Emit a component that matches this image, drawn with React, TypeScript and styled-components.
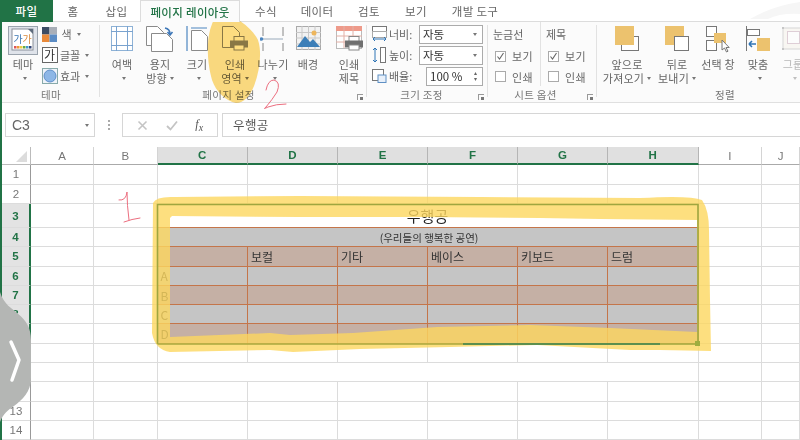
import React from "react";
import styled, { createGlobalStyle, css } from "styled-components";

const Global = createGlobalStyle`
  html, body { margin: 0; padding: 0; background: #fff; }
  * { box-sizing: border-box; }
`;

const FONT = `"Noto Sans CJK KR", "Noto Sans", "Liberation Sans", sans-serif`;
const GREEN = "#217346";
const ORANGE = "#c4754a";

const Page = styled.div`
  position: relative; width: 800px; height: 440px; overflow: hidden; background: #fff;
  font-family: ${FONT}; color: #555; filter: blur(0.45px);
  display: flex; flex-direction: column;
`;
const TabBar = styled.div`display: flex; height: 21px; background: #fff; flex: none;`;
const Tab = styled.div<{ $w: number; $kind?: "file" | "active" }>`
  width: ${p => p.$w}px; display: flex; align-items: center; justify-content: center;
  font-size: 11.5px; color: #666; letter-spacing: .3px; margin-bottom: -1px; position: relative; z-index: 1;
  ${p => p.$kind === "file" && css`background: ${GREEN}; color: #fff; font-weight: 500;`}
  ${p => p.$kind === "active" && css`background: #fbfbfb; color: ${GREEN}; border: 1px solid #dcdcdc; border-bottom: 0; font-weight: 500;`}
`;
const Body = styled.div`flex: 1; min-height: 0; border-left: 2px solid ${GREEN}; display: flex; flex-direction: column; background: #fff;`;
const Ribbon = styled.div`
  height: 82px; flex: none; display: flex; overflow: hidden; background: #fbfbfb;
  border-top: 1px solid #dcdcdc; border-bottom: 1px solid #e0e0e0;
`;
const Group = styled.div<{ $w: number; $sep?: boolean }>`
  width: ${p => p.$w}px; flex: none; display: flex; flex-direction: column; position: relative;
  ${p => p.$sep && css`
    &::after { content: ""; position: absolute; right: 0; top: 3px; bottom: 5px; width: 1px; background: #e2e2e2; }
  `}
`;
const GroupBody = styled.div<{ $pl?: number }>`height: 65px; display: flex; padding-left: ${p => p.$pl ?? 0}px;`;
const GroupLabel = styled.div<{ $pr?: number }>`
  height: 15px; line-height: 15px; text-align: center; font-size: 10.5px; color: #777; letter-spacing: .3px;
  padding-right: ${p => p.$pr ?? 0}px;
`;
const Launcher = styled.span`
  position: absolute; right: 4px; bottom: 2px; width: 6px; height: 6px;
  border-left: 1px solid #999; border-top: 1px solid #999;
  &::after { content: ""; position: absolute; right: 0; bottom: 0; width: 3px; height: 3px; background: #777; }
`;
const BigBtn = styled.div<{ $w: number; $ml?: number; $faint?: boolean }>`
  width: ${p => p.$w}px; margin-left: ${p => p.$ml ?? 0}px; flex: none; display: flex; flex-direction: column; align-items: center;
  font-size: 11px; line-height: 14.3px; color: #666; white-space: nowrap; letter-spacing: .2px;
  opacity: ${p => (p.$faint ? 0.45 : 1)};
`;
const IconBox = styled.div`height: 35px; padding-top: 4px; display: flex; justify-content: center; flex: none;`;
const Caret = styled.span`
  display: inline-block; width: 0; height: 0; border-left: 2.5px solid transparent; border-right: 2.5px solid transparent;
  border-top: 3px solid #777; vertical-align: middle; margin-left: 3px;
`;
const CaretLine = styled.div`height: 14px; display: flex; align-items: center; justify-content: center;`;
const SmallCol = styled.div`display: flex; flex-direction: column; padding-top: 3px; gap: 3px;`;
const SmallRow = styled.div`display: flex; align-items: center; height: 18px; gap: 2px; font-size: 11px; color: #666;`;
const SizeCol = styled.div`display: flex; flex-direction: column; padding: 3px 0 0 5px; gap: 3px; width: 120px;`;
const SizeRow = styled.div`display: flex; align-items: center; height: 18px; font-size: 11px; color: #666;`;
const SizeLabel = styled.span<{ $w: number }>`width: ${p => p.$w}px; flex: none; padding-left: 2px; white-space: nowrap;`;
const Select = styled.div<{ $w: number }>`
  width: ${p => p.$w}px; height: 19px; background: #fff; border: 1px solid #ababab; padding: 0 5px 0 3px;
  display: flex; align-items: center; justify-content: space-between; font-size: 11.5px; color: #333;
`;
const Spin = styled.span`font-size: 6px; line-height: 6px; color: #666; text-align: center;`;
const SheetCol = styled.div<{ $w: number; $sep?: boolean }>`
  width: ${p => p.$w}px; flex: none; padding-left: 5px; padding-top: 3px; font-size: 11px; color: #666;
  ${p => p.$sep && "border-right: 1px solid #e2e2e2; margin-bottom: 1px;"}
`;
const SheetTitle = styled.div`height: 18px; line-height: 18px; margin-bottom: 3px;`;
const CheckRow = styled.div`display: flex; align-items: center; gap: 6px; height: 20.5px; padding-left: 2px; letter-spacing: .3px;`;
const Check = styled.span`
  width: 11px; height: 11px; border: 1px solid #aaa; background: #fff; display: flex; align-items: center; justify-content: center;
`;
const FormulaBar = styled.div`height: 44px; flex: none; padding: 10px 0 10px 3px; display: flex; align-items: stretch; background: #fff;`;
const NameBox = styled.div`
  width: 90px; border: 1px solid #d6d6d6; display: flex; align-items: center; justify-content: space-between;
  padding: 0 5px 0 6px; font-size: 14px; color: #666; font-family: "Liberation Sans", sans-serif;
`;
const Dots = styled.div`width: 27px; display: flex; flex-direction: column; align-items: center; justify-content: center; gap: 2px;
  & > i { width: 2px; height: 2px; background: #aaa; display: block; }`;
const FxBox = styled.div`
  width: 96px; border: 1px solid #d6d6d6; display: flex; align-items: center; justify-content: space-around; padding: 0 5px;
  & > em { font-family: "Liberation Serif", serif; font-size: 12px; color: #555; }
`;
const Input = styled.div`
  flex: 1; margin-left: 4px; border: 1px solid #d6d6d6; border-right: 0; padding-left: 10px; font-size: 12.5px; line-height: 22px; color: #555; letter-spacing: .4px;
`;
const Grid = styled.div`
  flex: 1; display: grid; grid-template-columns: 29px 63px 63.5px 90.5px 90px 90px 90px 90px 90.5px 63.5px 38px;
  grid-template-rows: 18px 19.5px 19.5px 24px repeat(11, 19.3px); overflow: hidden;
`;
const Corner = styled.div`position: relative; border-right: 1px solid #bbb; border-bottom: 1px solid #bbb;
  &::after { content: ""; position: absolute; right: 3px; bottom: 2px; border-left: 11px solid transparent; border-bottom: 11px solid #dcdcdc; }
`;
const ColHead = styled.div<{ $on?: boolean }>`
  display: flex; align-items: center; justify-content: center; font-size: 11.5px; color: #777; font-family: "Liberation Sans", sans-serif;
  border-right: 1px solid #d4d4d4; border-bottom: 1px solid #aaa;
  ${p => p.$on && css`background: #e0e0e0; color: ${GREEN}; font-weight: 700; border-bottom: 2px solid ${GREEN}; border-right-color: #b5b5b5;`}
`;
const RowHead = styled.div<{ $on?: boolean }>`
  display: flex; align-items: center; justify-content: center; font-size: 11.5px; color: #777; font-family: "Liberation Sans", sans-serif;
  border-right: 1px solid #999; border-bottom: 1px solid #dcdcdc; background: #fff;
  ${p => p.$on && css`background: #e3e3e3; color: ${GREEN}; font-weight: 700; border-right: 2px solid ${GREEN};`}
`;
const Cell = styled.div<{ $tone?: "gray" | "brown"; $span?: number; $kind?: "title" | "sub" }>`
  border-right: 1px solid #dcdcdc; border-bottom: 1px solid #dcdcdc; font-size: 12px; color: #333;
  display: flex; align-items: center; padding-left: 3px; white-space: nowrap; min-width: 0;
  ${p => p.$span && css`grid-column: span ${p.$span};`}
  ${p => p.$tone && css`
    background: ${p.$tone === "gray" ? "#c5c5c5" : "#c5b0a5"};
    border-right-color: ${ORANGE}; border-bottom-color: ${ORANGE};
  `}
  ${p => p.$kind === "title" && css`justify-content: center; font-size: 15px; color: #222; border-bottom-color: ${ORANGE}; padding: 0; line-height: 1;`}
  ${p => p.$kind === "sub" && css`justify-content: center; font-size: 10.5px; color: #333;`}
`;
const Overlay = styled.svg`position: absolute; left: 0; top: 0; width: 800px; height: 440px; pointer-events: none;`;
const Multiply = styled.path`mix-blend-mode: multiply;`;

/* ---------- Icons ---------- */
const ThemeIcon = () => (
  <svg width="30" height="30" viewBox="0 0 30 30">
    <rect x=".5" y=".5" width="29" height="28" fill="#dfe3ea" stroke="#9aa3ad" />
    <rect x="4" y="3" width="21" height="21" fill="#fff" stroke="#8a9099" />
    <path d="M20 3h5v5z" fill="#5f6c7d" />
    <text x="5.5" y="17" fontSize="10" fill="#3c78b4" fontFamily={FONT}>가</text>
    <text x="14.5" y="17" fontSize="10" fill="#d98a3d" fontFamily={FONT}>가</text>
    {["#d55", "#e93", "#ec4", "#6a4", "#49c", "#347"].map((c, i) => <rect key={c} x={6 + i * 3} y="20" width="2.5" height="2.5" fill={c} />)}
  </svg>
);
const ColorIcon = () => (
  <svg width="15" height="15" viewBox="0 0 15 15">
    <rect x="0" y="0" width="7.5" height="7.5" fill="#3b4b63" /><rect x="7.5" y="0" width="7.5" height="7.5" fill="#a9afb8" />
    <rect x="0" y="7.5" width="7.5" height="7.5" fill="#e98a3a" /><rect x="7.5" y="7.5" width="7.5" height="7.5" fill="#5b8cc4" />
  </svg>
);
const FontIcon = () => (
  <svg width="16" height="16" viewBox="0 0 16 16">
    <rect x=".5" y=".5" width="15" height="15" fill="#fff" stroke="#666" />
    <text x="2" y="13" fontSize="12" fill="#333" fontFamily={FONT}>가</text>
  </svg>
);
const EffectIcon = () => (
  <svg width="16" height="16" viewBox="0 0 16 16">
    <rect x=".5" y=".5" width="15" height="15" fill="#eef3f9" stroke="#8aa" />
    <circle cx="8" cy="8" r="6" fill="#8db7e6" stroke="#5f8fc9" />
  </svg>
);
const MarginIcon = () => (
  <svg width="22" height="25" viewBox="0 0 22 25" fill="none">
    <rect x=".5" y=".5" width="21" height="24" fill="#fff" stroke="#8eb2d6" />
    <path d="M5.5 0v25M16.5 0v25M0 5.5h22M0 19.5h22" stroke="#7aa3cf" />
  </svg>
);
const PageShape = ({ x, y, w, h }: { x: number; y: number; w: number; h: number }) => (
  <path d={`M${x + .5} ${y + .5}h${w - 6}l6 6V${y + h - .5}H${x + .5}z`} fill="#fff" stroke="#8a8a8a" />
);
const OrientIcon = () => (
  <svg width="28" height="27" viewBox="0 0 28 27" fill="none">
    <PageShape x={0} y={0} w={17} h={20} />
    <PageShape x={5} y={7} w={21} h={19} />
    <path d="M19 2q5 1 5 6M21.5 6l2.5 3 2.5-3" stroke="#3f78b8" strokeWidth="1.6" />
  </svg>
);
const SizeIcon = () => (
  <svg width="22" height="25" viewBox="0 0 22 25" fill="none">
    <PageShape x={5} y={4} w={16} h={21} />
    <path d="M1 0v25M5 2h16" stroke="#4d86c0" strokeWidth="1.2" />
  </svg>
);
const Printer = ({ x, y, fill = "#8a8a8a" }: { x: number; y: number; fill?: string }) => (
  <g transform={`translate(${x} ${y})`}>
    <rect x="4" y="0.5" width="10" height="5" fill="#fff" stroke="#888" />
    <rect x="0" y="4.5" width="18" height="7" fill={fill} />
    <rect x="4" y="9" width="10" height="5" fill="#fff" stroke="#888" />
  </g>
);
const PrintAreaIcon = () => (
  <svg width="27" height="27" viewBox="0 0 27 27" fill="none">
    <PageShape x={0} y={0} w={17} h={22} />
    <Printer x={8} y={10} />
  </svg>
);
const BreakIcon = () => (
  <svg width="27" height="26" viewBox="0 0 27 26" fill="none">
    <path d="M3 1v9M23 1v9M3 17v8M23 17v8" stroke="#888" />
    <path d="M3 13h20" stroke="#9ab" />
    <circle cx="1.5" cy="13" r="1.8" fill="#4d86c0" />
  </svg>
);
const BackgroundIcon = () => (
  <svg width="25" height="24" viewBox="0 0 25 24" fill="none">
    <rect x=".5" y=".5" width="24" height="23" fill="#f2f2f2" stroke="#aaa" />
    <path d="M0 6.5h25M0 12h25M0 18h25M6 0v24M12.5 0v24M19 0v24" stroke="#c8c8c8" />
    <circle cx="18" cy="7" r="2.5" fill="#eeb65c" />
    <path d="M1 21l8-11 5 6 3-3 7 8z" fill="#3d7fb8" />
  </svg>
);
const PrintTitleIcon = () => (
  <svg width="27" height="27" viewBox="0 0 27 27" fill="none">
    <rect x=".5" y=".5" width="25" height="22" fill="#fff" stroke="#bbb" />
    <rect x="0" y="0" width="26" height="5" fill="#ee9a8a" />
    <path d="M8 0v22M17 0v22M0 10h26M0 16h26" stroke="#e3b0a6" />
    <Printer x={9} y={10} fill="#707070" />
  </svg>
);
const WidthIcon = () => (
  <svg width="15" height="16" viewBox="0 0 15 16" fill="none">
    <rect x=".5" y=".5" width="14" height="5" fill="#fff" stroke="#777" />
    <rect x=".5" y="5.5" width="14" height="6" fill="#fff" stroke="#aaa" />
    <path d="M1 13h13M1 13l2-2M1 13l2 2M14 13l-2-2M14 13l-2 2" stroke="#2f74b5" />
  </svg>
);
const HeightIcon = () => (
  <svg width="15" height="16" viewBox="0 0 15 16" fill="none">
    <path d="M3 1v14M3 1L1 3M3 1l2 2M3 15l-2-2M3 15l2-2" stroke="#2f74b5" />
    <rect x="8.5" y=".5" width="5" height="15" fill="#fff" stroke="#777" />
  </svg>
);
const ScaleIcon = () => (
  <svg width="15" height="14" viewBox="0 0 15 14" fill="none">
    <rect x=".5" y=".5" width="11" height="11" fill="#fff" stroke="#777" />
    <rect x="6" y="6" width="8" height="7.5" fill="#e8f0fa" stroke="#5f90c4" />
  </svg>
);
const Tick = () => (
  <svg width="9" height="9" viewBox="0 0 9 9" fill="none"><path d="M1.5 4.5l2 2.5 4-6" stroke="#666" strokeWidth="1.1" /></svg>
);
const ForwardIcon = () => (
  <svg width="25" height="25" viewBox="0 0 25 25" fill="none">
    <rect x="6.5" y="10.5" width="17" height="14" fill="#fff" stroke="#777" />
    <rect x="0" y="0" width="19" height="19" fill="#ecc26e" />
  </svg>
);
const BackwardIcon = () => (
  <svg width="25" height="25" viewBox="0 0 25 25" fill="none">
    <rect x="0" y="0" width="19" height="19" fill="#ecc26e" />
    <rect x="9.5" y="10.5" width="14" height="14" fill="#fff" stroke="#777" />
  </svg>
);
const PaneIcon = () => (
  <svg width="25" height="27" viewBox="0 0 25 27" fill="none">
    <rect x=".5" y=".5" width="10" height="10" fill="#fff" stroke="#777" />
    <rect x=".5" y="14.5" width="10" height="10" fill="#fff" stroke="#777" />
    <rect x="8" y="7" width="12" height="10" fill="#ecc26e" />
    <path d="M16 14v10l2.5-2 2 4 1.5-.8-2-3.7h3.2z" fill="#fff" stroke="#777" />
  </svg>
);
const AlignIcon = () => (
  <svg width="25" height="25" viewBox="0 0 25 25" fill="none">
    <path d="M.5 0v25" stroke="#777" />
    <rect x="1.5" y="3.5" width="12" height="6" fill="#fff" stroke="#777" />
    <rect x="11" y="12" width="13" height="13" fill="#ecc26e" />
    <path d="M3 18h7M3 18l3-3M3 18l3 3" stroke="#2f74b5" strokeWidth="1.6" />
  </svg>
);
const GroupIcon = () => (
  <svg width="25" height="25" viewBox="0 0 25 25" fill="none">
    <rect x="2" y="2" width="21" height="21" stroke="#aaa" fill="#f6f0e8" />
    <rect x="1" y="1" width="2" height="2" fill="#888" /><rect x="1" y="22" width="2" height="2" fill="#888" />
    <rect x="6.5" y="5.5" width="12" height="12" stroke="#b9a" fill="#fff" />
  </svg>
);

const Big = ({ w, ml, icon, l1, l2, caret, faint }: { w: number; ml?: number; icon: React.ReactNode; l1: string; l2?: string; caret?: boolean; faint?: boolean }) => (
  <BigBtn $w={w} $ml={ml} $faint={faint}>
    <IconBox>{icon}</IconBox>
    <div>{l1}</div>
    <CaretLine>{l2}{caret && <Caret />}</CaretLine>
  </BigBtn>
);

const tabs = [
  { t: "파일", w: 53, k: "file" as const }, { t: "홈", w: 40 }, { t: "삽입", w: 47 },
  { t: "페이지 레이아웃", w: 100, k: "active" as const }, { t: "수식", w: 52 }, { t: "데이터", w: 50 },
  { t: "검토", w: 54 }, { t: "보기", w: 40 }, { t: "개발 도구", w: 78 },
];
const cols = ["C", "D", "E", "F", "G", "H"];
const brandLetters: Record<number, string> = { 6: "A", 7: "B", 8: "C", 9: "D" };
const headers = ["", "보컬", "기타", "베이스", "키보드", "드럼"];

const Plain = ({ n }: { n: number }) => <>{Array.from({ length: n }, (_, i) => <Cell key={i} />)}</>;

const SheetRow = ({ r }: { r: number }) => {
  const on = r >= 3 && r <= 9;
  let mid: React.ReactNode;
  if (r === 3) mid = <Cell $span={6} $kind="title">우행공</Cell>;
  else if (r === 4) mid = <Cell $span={6} $kind="sub" $tone="gray">(우리들의 행복한 공연)</Cell>;
  else if (r === 11) mid = <Cell $span={6} />;
  else if (r >= 5 && r <= 9) {
    const tone = r % 2 === 1 ? "brown" : "gray";
    mid = cols.map((c, i) => (
      <Cell key={c} $tone={tone}>{r === 5 ? headers[i] : i === 0 ? brandLetters[r] : ""}</Cell>
    ));
  } else mid = <Plain n={6} />;
  return (
    <>
      <RowHead $on={on}>{r}</RowHead>
      <Plain n={2} />
      {mid}
      <Plain n={2} />
    </>
  );
};

export default function App() {
  return (
    <Page>
      <Global />
      <TabBar>
        {tabs.map(t => <Tab key={t.t} $w={t.w} $kind={t.k}>{t.t}</Tab>)}
      </TabBar>
      <Body>
        <Ribbon>
          <Group $w={98} $sep>
            <GroupBody $pl={2}>
              <BigBtn $w={38}>
                <IconBox><ThemeIcon /></IconBox>
                <div>테마</div>
                <CaretLine><Caret /></CaretLine>
              </BigBtn>
              <SmallCol>
                <SmallRow><ColorIcon />&nbsp;색<Caret /></SmallRow>
                <SmallRow><FontIcon />글꼴<Caret /></SmallRow>
                <SmallRow><EffectIcon />효과<Caret /></SmallRow>
              </SmallCol>
            </GroupBody>
            <GroupLabel>테마</GroupLabel>
          </Group>
          <Group $w={267} $sep>
            <GroupBody $pl={4}>
              <Big w={36} icon={<MarginIcon />} l1="여백" caret />
              <Big w={40} icon={<OrientIcon />} l1="용지" l2="방향" caret />
              <Big w={34} icon={<SizeIcon />} l1="크기" caret />
              <Big w={42} icon={<PrintAreaIcon />} l1="인쇄" l2="영역" caret />
              <Big w={34} icon={<BreakIcon />} l1="나누기" caret />
              <Big w={36} icon={<BackgroundIcon />} l1="배경" />
              <Big w={36} ml={5} icon={<PrintTitleIcon />} l1="인쇄" l2="제목" />
            </GroupBody>
            <GroupLabel $pr={10}>페이지 설정</GroupLabel>
            <Launcher />
          </Group>
          <Group $w={121} $sep>
            <GroupBody>
              <SizeCol>
                <SizeRow><WidthIcon /><SizeLabel $w={32}>너비:</SizeLabel><Select $w={64}>자동<Caret /></Select></SizeRow>
                <SizeRow><HeightIcon /><SizeLabel $w={32}>높이:</SizeLabel><Select $w={64}>자동<Caret /></Select></SizeRow>
                <SizeRow><ScaleIcon /><SizeLabel $w={39}>배율:</SizeLabel><Select $w={57}>100 %<Spin>▴<br />▾</Spin></Select></SizeRow>
              </SizeCol>
            </GroupBody>
            <GroupLabel $pr={12}>크기 조정</GroupLabel>
            <Launcher />
          </Group>
          <Group $w={109} $sep>
            <GroupBody>
              <SheetCol $w={53} $sep>
                <SheetTitle>눈금선</SheetTitle>
                <CheckRow><Check><Tick /></Check>보기</CheckRow>
                <CheckRow><Check />인쇄</CheckRow>
              </SheetCol>
              <SheetCol $w={55}>
                <SheetTitle>제목</SheetTitle>
                <CheckRow><Check><Tick /></Check>보기</CheckRow>
                <CheckRow><Check />인쇄</CheckRow>
              </SheetCol>
            </GroupBody>
            <GroupLabel $pr={14}>시트 옵션</GroupLabel>
            <Launcher />
          </Group>
          <Group $w={256}>
            <GroupBody $pl={3}>
              <Big w={54} icon={<ForwardIcon />} l1="앞으로" l2="가져오기" caret />
              <Big w={46} icon={<BackwardIcon />} l1="뒤로" l2="보내기" caret />
              <Big w={36} icon={<PaneIcon />} l1="선택 창" />
              <Big w={44} icon={<AlignIcon />} l1="맞춤" caret />
              <Big w={26} faint icon={<GroupIcon />} l1="그룹" caret />
            </GroupBody>
            <GroupLabel>정렬</GroupLabel>
          </Group>
        </Ribbon>
        <FormulaBar>
          <NameBox>C3<Caret /></NameBox>
          <Dots><i /><i /><i /></Dots>
          <FxBox>
            <svg width="11" height="11" viewBox="0 0 11 11"><path d="M1.5 1.5l8 8M9.5 1.5l-8 8" stroke="#c4c4c4" strokeWidth="1.6" /></svg>
            <svg width="12" height="11" viewBox="0 0 12 11" fill="none"><path d="M1 6l3.5 3.5L11 1.5" stroke="#c4c4c4" strokeWidth="1.8" /></svg>
            <em>f<sub>x</sub></em>
          </FxBox>
          <Input>우행공</Input>
        </FormulaBar>
        <Grid>
          <Corner />
          <ColHead>A</ColHead><ColHead>B</ColHead>
          {cols.map(c => <ColHead key={c} $on>{c}</ColHead>)}
          <ColHead>I</ColHead><ColHead>J</ColHead>
          {Array.from({ length: 14 }, (_, i) => <SheetRow key={i} r={i + 1} />)}
        </Grid>
      </Body>
      <Overlay viewBox="0 0 800 440">
        <path d="M750 19 Q772 6 800 2 V14 Q780 13 768 19z" fill="#f6f6f6" />
        <Multiply
          d="M222 13 C236 16 252 28 258 40 C262 52 260 70 254 86 C250 96 244 103 236 103 C226 101 216 92 212 80 C208 66 206 46 210 30 C213 20 216 13 222 13z"
          fill="#fddc80"
        />
        <path
          fillRule="evenodd"
          fill="#fdd75f"
          fillOpacity=".8"
          d="M153 203 Q156 196 175 197 L300 196 L480 197 L640 198 Q690 195 702 200 Q709 210 709 230 L710 300 L711 351 L660 350 L630 350 L537 345 L450 347 L360 349 L293 352 L270 350 L170 352 Q155 350 152 333 Z
             M170 218 L172 216 L300 217 L420 217 L540 218 L600 219 L697 220 L697 332 L610 328 L530 325 L437 327 L353 333 L290 335 L270 333 L170 337 Z"
        />
        <path d="M157.5 344V204.5H698V344H463" fill="none" stroke="#9fa63f" strokeWidth="1.6" />
        <path d="M463 344H157.5" fill="none" stroke="#a9a83f" strokeWidth="1.6" />
        <path d="M463 344H660" fill="none" stroke="#3f8550" strokeWidth="1.6" />
        <rect x="695" y="341" width="5" height="5" fill="#9fae3f" />
        <g fill="none" stroke="#ec6f80" strokeWidth="1" strokeLinecap="round">
          <path d="M119 200 Q126 201 127 192 Q127 205 129 220 M124 222 Q132 219 140 218" />
          <path d="M266 90 Q268 80 274 80 Q281 82 277 92 Q272 100 266 107 Q262 110 268 107 Q276 104 286 104" />
        </g>
        <path d="M0 292 C4 305 12 308 18 314 C26 320 31 328 31 340 L31 378 C31 392 22 400 14 406 C8 410 3 414 0 422 Z" fill="#b4b6b4" />
        <path d="M11 342 L19 360 L12 380" fill="none" stroke="#fff" strokeWidth="3.5" strokeLinecap="round" strokeLinejoin="round" />
      </Overlay>
    </Page>
  );
}
